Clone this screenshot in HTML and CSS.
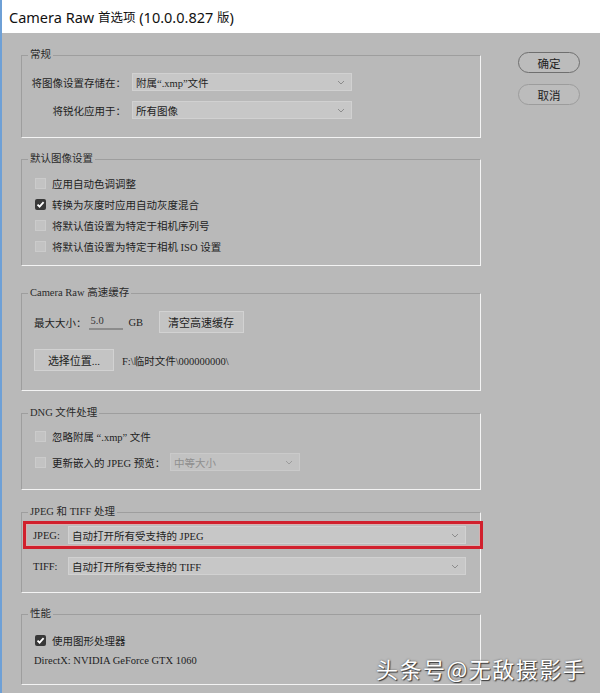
FILE: index.html
```html
<!DOCTYPE html>
<html lang="zh">
<head>
<meta charset="utf-8">
<link rel="stylesheet" href="styles.css">
</head>
<body>
<div class="window">
  <div class="titlebar">Camera Raw <span class="tcjk">首选项</span>&nbsp;(10.0.0.827 <span class="tcjk">版</span>)</div>
  <div class="content">
    <div class="groups">
      <div class="group g1">
        <div class="legend">常规</div>
        <div class="frow first">
          <span class="lbl">将图像设置存储在：</span>
          <div class="select w220"><span>附属“.xmp”文件</span><svg class="arrow" width="8" height="5" viewBox="0 0 8 5"><path d="M1 1 L4 4 L7 1" fill="none" stroke="#8c8c8c" stroke-width="1"/></svg></div>
        </div>
        <div class="frow">
          <span class="lbl">将锐化应用于：</span>
          <div class="select w220"><span>所有图像</span><svg class="arrow" width="8" height="5" viewBox="0 0 8 5"><path d="M1 1 L4 4 L7 1" fill="none" stroke="#8c8c8c" stroke-width="1"/></svg></div>
        </div>
      </div>

      <div class="group g2">
        <div class="legend">默认图像设置</div>
        <div class="crow first"><span class="cb"></span>应用自动色调调整</div>
        <div class="crow"><svg class="cbx" width="11" height="11" viewBox="0 0 11 11"><rect x="0" y="0" width="11" height="11" rx="2" fill="#383838"/><path d="M2.5 5.6 L4.6 7.7 L8.6 3.2" fill="none" stroke="#fff" stroke-width="1.8"/></svg>转换为灰度时应用自动灰度混合</div>
        <div class="crow"><span class="cb"></span>将默认值设置为特定于相机序列号</div>
        <div class="crow"><span class="cb"></span>将默认值设置为特定于相机 ISO 设置</div>
      </div>

      <div class="group g3">
        <div class="legend">Camera Raw 高速缓存</div>
        <div class="brow">
          <span>最大大小：</span>
          <span class="num">5.0</span>
          <span class="unit">GB</span>
          <div class="btn w85">清空高速缓存</div>
        </div>
        <div class="brow r2">
          <div class="btn w80">选择位置...</div>
          <span class="path">F:\临时文件\000000000\</span>
        </div>
      </div>

      <div class="group g4">
        <div class="legend">DNG 文件处理</div>
        <div class="crow h20 first"><span class="cb"></span>忽略附属 “.xmp” 文件</div>
        <div class="crow h20 gap6"><span class="cb"></span><span class="dtext">更新嵌入的 JPEG 预览：</span><div class="select w130 disabled"><span>中等大小</span><svg class="arrow" width="8" height="5" viewBox="0 0 8 5"><path d="M1 1 L4 4 L7 1" fill="none" stroke="#9c9c9c" stroke-width="1"/></svg></div></div>
      </div>

      <div class="group g5">
        <div class="legend">JPEG 和 TIFF 处理</div>
        <div class="highlight">
          <div class="jrow">
            <span class="jlbl">JPEG:</span>
            <div class="select w398"><span>自动打开所有受支持的 JPEG</span><svg class="arrow" width="8" height="5" viewBox="0 0 8 5"><path d="M1 1 L4 4 L7 1" fill="none" stroke="#8c8c8c" stroke-width="1"/></svg></div>
          </div>
        </div>
        <div class="jrow trow">
          <span class="jlbl">TIFF:</span>
          <div class="select w398"><span>自动打开所有受支持的 TIFF</span><svg class="arrow" width="8" height="5" viewBox="0 0 8 5"><path d="M1 1 L4 4 L7 1" fill="none" stroke="#8c8c8c" stroke-width="1"/></svg></div>
        </div>
      </div>

      <div class="group g6">
        <div class="legend">性能</div>
        <div class="crow h20 first"><svg class="cbx" width="11" height="11" viewBox="0 0 11 11"><rect x="0" y="0" width="11" height="11" rx="2" fill="#383838"/><path d="M2.5 5.6 L4.6 7.7 L8.6 3.2" fill="none" stroke="#fff" stroke-width="1.8"/></svg>使用图形处理器</div>
        <div class="info">DirectX: NVIDIA GeForce GTX 1060</div>
      </div>
    </div>

    <div class="actions">
      <div class="pill ok">确定</div>
      <div class="pill cancel">取消</div>
    </div>
  </div>
  <div class="watermark">头条号@无敌摄影手</div>
</div>
</body>
</html>
```

FILE: styles.css
```css
* { box-sizing: border-box; }
html, body { margin: 0; padding: 0; }
body {
  width: 600px;
  height: 693px;
  overflow: hidden;
  background: #b9b9b9;
  font-family: "Liberation Serif", "Noto Sans CJK SC", serif;
  font-size: 10.5px;
  color: #1e1e1e;
}
.window {
  position: relative;
  height: 693px;
  border-left: 2px solid #6ea0d6;
  background: #b9b9b9;
}
.titlebar {
  height: 33px;
  background: #ffffff;
  padding-left: 7px;
  display: flex;
  align-items: center;
  white-space: pre;
  font-family: "Noto Sans", "Noto Sans CJK SC", sans-serif;
  font-size: 14.5px;
  color: #111;
}
.tcjk { font-size: 12.5px; }
.content {
  display: flex;
  padding: 22px 0 0 19px;
}
.groups {
  width: 460px;
  display: flex;
  flex-direction: column;
}
.group {
  border: 1px solid;
  border-color: #9e9e9e #f3f3f3 #f3f3f3 #9e9e9e;
}
.legend {
  width: fit-content;
  height: 12px;
  line-height: 12px;
  margin: -7px 0 0 6px;
  padding: 0 2px;
  background: #b9b9b9;
  color: #2a2a2a;
  white-space: pre;
}
.g1 { height: 83px; }
.g2 { height: 107px; margin-top: 21px; }
.g3 { height: 98px; margin-top: 27px; }
.g4 { height: 77px; margin-top: 22px; }
.g5 { height: 81px; margin-top: 22px; }
.g6 { height: 71px; margin-top: 21px; }

/* group 1 */
.frow {
  display: flex;
  align-items: center;
  height: 18px;
  margin-top: 10px;
}
.frow.first { margin-top: 12px; }
.lbl {
  width: 104px;
  text-align: right;
  margin-right: 6px;
  white-space: nowrap;
}
.select {
  height: 18px;
  background: #c7c7c7;
  border: 1px solid #d1d1d1;
  display: flex;
  align-items: center;
  padding-left: 3px;
  white-space: pre;
}
.select .arrow { margin-left: auto; margin-right: 6px; flex-shrink: 0; }
.w220 { width: 220px; }
.w130 { width: 130px; }
.w398 { width: 398px; }
.select.disabled { background: #c2c2c2; border-color: #cacaca; color: #8f8f8f; }

/* checkboxes */
.crow {
  display: flex;
  align-items: center;
  height: 21px;
  padding-left: 13px;
  white-space: pre;
}
.g2 .crow.first { margin-top: 8px; }
.cb {
  width: 11px;
  height: 11px;
  background: #c3c3c3;
  border: 1px solid #cbcbcb;
  margin-right: 6px;
  flex-shrink: 0;
}
.cbx { margin-right: 6px; flex-shrink: 0; }
.h20 { height: 20px; }
.g4 .crow.first { margin-top: 7px; }
.gap6 { margin-top: 6px; }
.dtext { width: 118px; }

/* group 3 */
.brow {
  display: flex;
  align-items: center;
  height: 22px;
  padding-left: 12px;
  margin-top: 12px;
  white-space: pre;
}
.brow.r2 { margin-top: 16px; }
.num {
  width: 34px;
  height: 16px;
  line-height: 14px;
  margin-left: 2px;
  padding-left: 2px;
  border-bottom: 2px solid #8c8c8c;
  color: #333;
}
.unit { width: 36px; padding-left: 6px; }
.btn {
  height: 22px;
  background: #c4c4c4;
  border: 1px solid #d2d2d2;
  display: flex;
  align-items: center;
  justify-content: center;
  font-size: 11px;
}
.w85 { width: 85px; }
.w80 { width: 80px; }
.path { margin-left: 8px; }

/* group 5 */
.highlight {
  height: 28px;
  margin: 3px -3px 0 1px;
  border: 3px solid #d1202d;
  box-shadow: inset 0 0 0 1px rgba(240, 170, 170, 0.55);
  padding: 2px 0 0 7px;
}
.jrow {
  display: flex;
  align-items: center;
  height: 18px;
}
.trow { margin-top: 8px; padding-left: 11px; }
.jlbl { width: 35px; }

/* group 6 */
.g6 .crow.first { margin-top: 10px; }
.info {
  height: 18px;
  line-height: 18px;
  margin-top: 2px;
  padding-left: 12px;
}

/* right buttons */
.actions {
  margin-left: 37px;
  margin-top: -3px;
  display: flex;
  flex-direction: column;
  gap: 11px;
}
.pill {
  width: 62px;
  height: 21px;
  border-radius: 11px;
  border: 1px solid #6f6f6f;
  background: #bcbcbc;
  display: flex;
  align-items: center;
  justify-content: center;
  font-family: "Noto Sans CJK SC", sans-serif;
  font-size: 11.5px;
  color: #222;
}
.pill.cancel { border-color: #9c9c9c; }

.watermark {
  position: absolute;
  left: 374px;
  top: 652px;
  font-family: "Noto Sans CJK SC", sans-serif;
  font-size: 22px;
  letter-spacing: 1.5px;
  color: #ffffff;
  text-shadow: 1px 1px 1px #3a3a3a, 0 0 2px #555;
  white-space: nowrap;
}
```
